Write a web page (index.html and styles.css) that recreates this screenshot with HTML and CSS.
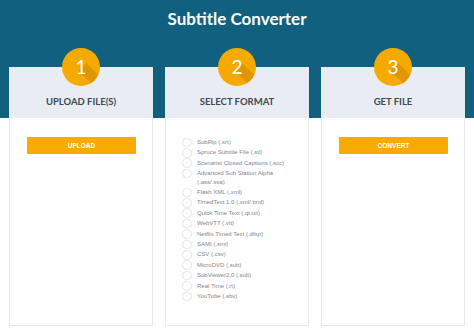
FILE: index.html
```html
<!DOCTYPE html>
<html lang="en">
<head>
    <meta charset="UTF-8">
    <meta name="viewport" content="width=device-width, initial-scale=1.0">
    <title>Subtitle Converter</title>
    <link rel="stylesheet" href="styles.css">
</head>
<body>
    <h1 class="title">Subtitle Converter</h1>

    <div class="steps">
        <div class="card">
            <div class="card-head">
                <div class="num"><span>1</span></div>
                <h2>UPLOAD FILE(S)</h2>
            </div>
            <div class="card-body">
                <button class="btn">UPLOAD</button>
            </div>
        </div>

        <div class="card">
            <div class="card-head">
                <div class="num"><span>2</span></div>
                <h2>SELECT FORMAT</h2>
            </div>
            <div class="card-body">
                <ul class="formats">
                    <li><i class="radio"></i><span>SubRip (.srt)</span></li>
                    <li><i class="radio"></i><span>Spruce Subtitle File (.stl)</span></li>
                    <li><i class="radio"></i><span>Scenarist Closed Captions (.scc)</span></li>
                    <li><i class="radio"></i><span>Advanced Sub Station Alpha (.ass/.ssa)</span></li>
                    <li><i class="radio"></i><span>Flash XML (.xml)</span></li>
                    <li><i class="radio"></i><span>TimedText 1.0 (.xml/.ttml)</span></li>
                    <li><i class="radio"></i><span>Quick Time Text (.qt.txt)</span></li>
                    <li><i class="radio"></i><span>WebVTT (.vtt)</span></li>
                    <li><i class="radio"></i><span>Netflix Timed Text (.dfxp)</span></li>
                    <li><i class="radio"></i><span>SAMI (.smi)</span></li>
                    <li><i class="radio"></i><span>CSV (.csv)</span></li>
                    <li><i class="radio"></i><span>MicroDVD (.sub)</span></li>
                    <li><i class="radio"></i><span>SubViewer2.0 (.sub)</span></li>
                    <li><i class="radio"></i><span>Real Time (.rt)</span></li>
                    <li><i class="radio"></i><span>YouTube (.sbv)</span></li>
                </ul>
            </div>
        </div>

        <div class="card">
            <div class="card-head">
                <div class="num"><span>3</span></div>
                <h2>GET FILE</h2>
            </div>
            <div class="card-body">
                <button class="btn">CONVERT</button>
            </div>
        </div>
    </div>
</body>
</html>
```

FILE: styles.css
```css
body {
    margin: 0;
    font-family: 'Lato', 'Liberation Sans', sans-serif;
    background: linear-gradient(#12607f 0, #12607f 118px, #ffffff 118px);
    height: 334px;
    overflow: hidden;
}

.title {
    margin: 0;
    padding-top: 9px;
    font-size: 17px;
    line-height: 20px;
    font-weight: 700;
    color: #ffffff;
    text-align: center;
}

.steps {
    display: flex;
    gap: 12px;
    padding: 0 9px;
    margin-top: 38px;
}

.card {
    flex: 1;
    height: 259px;
    box-sizing: border-box;
    background: #ffffff;
    border: 1px solid #e7eaee;
    border-top: none;
    display: flex;
    flex-direction: column;
}

.card-head {
    background: #e9edf3;
    height: 51px;
    text-align: center;
}

.num {
    position: relative;
    width: 38px;
    height: 38px;
    margin: -19px auto 0;
    border-radius: 50%;
    background: #f6aa00;
    overflow: hidden;
    color: #ffffff;
    font-size: 19px;
    line-height: 38px;
    font-weight: 400;
}

/* long shadow */
.num::after {
    content: "";
    position: absolute;
    left: 15px;
    top: 19px;
    width: 11px;
    height: 40px;
    background: #de9700;
    transform-origin: 5.5px 0;
    transform: rotate(-45deg);
}

.num span {
    position: relative;
    z-index: 1;
}

.card-head h2 {
    margin: 10px 0 0;
    font-size: 9.5px;
    line-height: 12px;
    font-weight: 700;
    color: #3f4a54;
}

.card-body {
    padding: 19px 16px 0 17px;
}

.btn {
    display: block;
    width: 100%;
    height: 17px;
    border: none;
    border-radius: 1px;
    background: #f7aa00;
    color: #ffffff;
    font-family: 'Liberation Sans', sans-serif;
    font-size: 6.5px;
    font-weight: 700;
    padding: 0;
}

.formats {
    list-style: none;
    margin: 1px 0 0 -1px;
    padding: 0;
    font-family: 'Liberation Sans', sans-serif;
    font-size: 6px;
    line-height: 8.4px;
    color: #7f868c;
}

.formats li {
    display: flex;
    align-items: flex-start;
    margin-bottom: 2px;
}

.formats span {
    max-width: 88px;
}

.radio {
    flex: none;
    width: 7.5px;
    height: 7.5px;
    margin: -0.4px 5.5px -2px 0;
    border: 1px solid #e1e4e8;
    border-radius: 50%;
    box-sizing: content-box;
}
```
